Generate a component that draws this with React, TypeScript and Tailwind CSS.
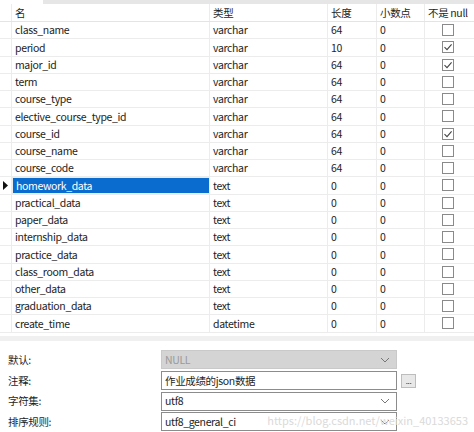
import React from "react";

interface FieldRow {
  name: string;
  type: string;
  length: string;
  decimals: string;
  notNull: boolean;
}

const rows: FieldRow[] = [
  { name: "class_name", type: "varchar", length: "64", decimals: "0", notNull: false },
  { name: "period", type: "varchar", length: "10", decimals: "0", notNull: true },
  { name: "major_id", type: "varchar", length: "64", decimals: "0", notNull: true },
  { name: "term", type: "varchar", length: "64", decimals: "0", notNull: false },
  { name: "course_type", type: "varchar", length: "64", decimals: "0", notNull: false },
  { name: "elective_course_type_id", type: "varchar", length: "64", decimals: "0", notNull: false },
  { name: "course_id", type: "varchar", length: "64", decimals: "0", notNull: true },
  { name: "course_name", type: "varchar", length: "64", decimals: "0", notNull: false },
  { name: "course_code", type: "varchar", length: "64", decimals: "0", notNull: false },
  { name: "homework_data", type: "text", length: "0", decimals: "0", notNull: false },
  { name: "practical_data", type: "text", length: "0", decimals: "0", notNull: false },
  { name: "paper_data", type: "text", length: "0", decimals: "0", notNull: false },
  { name: "internship_data", type: "text", length: "0", decimals: "0", notNull: false },
  { name: "practice_data", type: "text", length: "0", decimals: "0", notNull: false },
  { name: "class_room_data", type: "text", length: "0", decimals: "0", notNull: false },
  { name: "other_data", type: "text", length: "0", decimals: "0", notNull: false },
  { name: "graduation_data", type: "text", length: "0", decimals: "0", notNull: false },
  { name: "create_time", type: "datetime", length: "0", decimals: "0", notNull: false },
];

const SELECTED = "homework_data";

const Checkbox = ({ checked }: { checked: boolean }) => (
  <span className="flex h-[12px] w-[12px] items-center justify-center border border-[#8a8a8a] bg-white">
    {checked && (
      <svg width="10" height="10" viewBox="0 0 10 10">
        <path d="M1.5 5.2 L4 7.6 L8.6 2.4" fill="none" stroke="#444" strokeWidth="1.1" />
      </svg>
    )}
  </span>
);

const Chevron = () => (
  <svg width="10" height="6" viewBox="0 0 10 6" className="mr-[6px]">
    <path d="M1 1 L5 5 L9 1" fill="none" stroke="#777" strokeWidth="1" />
  </svg>
);

const cell = "flex items-center h-full border-r border-[#ececec] pl-[3px]";

const App: React.FC = () => {
  return (
    <div
      className="relative h-[432px] w-[474px] overflow-hidden bg-white text-[10.5px] tracking-[-0.35px] text-[#1e1e1e]"
      style={{ fontFamily: '"Noto Sans CJK SC", "Noto Sans", sans-serif' }}
    >
      <div className="ml-[43px] h-[4px] bg-[#e6e6e6]" />
      {/* header */}
      <div className="flex h-[18px] border-b border-[#e4e4e4]">
        <div className="w-[12px] border-r border-[#ececec]" />
        <div className={`${cell} w-[198px]`}>名</div>
        <div className={`${cell} w-[118px]`}>类型</div>
        <div className={`${cell} w-[49px]`}>长度</div>
        <div className={`${cell} w-[48px]`}>小数点</div>
        <div className="flex h-full flex-1 items-center whitespace-nowrap pl-[3px]">不是 null</div>
      </div>
      {/* body */}
      <div className="flex flex-col">
        {rows.map((r) => {
          const sel = r.name === SELECTED;
          return (
            <div key={r.name} className="flex h-[17.25px] border-b border-[#ececec]">
              <div className="flex w-[12px] items-center justify-center border-r border-[#ececec]">
                {sel && (
                  <svg width="5" height="9" viewBox="0 0 5 9">
                    <path d="M0 0 L5 4.5 L0 9 Z" fill="#111" />
                  </svg>
                )}
              </div>
              <div
                className={`${cell} w-[198px] ${
                  sel ? "bg-[#0a6ccf] text-white border border-[#3a3a3a]" : ""
                }`}
              >
                {r.name}
              </div>
              <div className={`${cell} w-[118px]`}>{r.type}</div>
              <div className={`${cell} w-[49px]`}>{r.length}</div>
              <div className={`${cell} w-[48px]`}>{r.decimals}</div>
              <div className="flex h-full flex-1 items-center justify-center pr-[3px]">
                <Checkbox checked={r.notNull} />
              </div>
            </div>
          );
        })}
      </div>
      <div className="mt-[3px] h-[5px] bg-[#f0f0f0]" />
      {/* property form */}
      <div className="flex flex-col pt-[9px]">
        <div className="flex h-[20.7px] items-center">
          <span className="w-[161px] pl-[8px]">默认:</span>
          <div className="flex h-[19px] w-[236px] items-center justify-between border border-[#c9c9c9] bg-[#d4d4d4] pl-[3px] text-[#9a9a9a]">
            NULL
            <Chevron />
          </div>
        </div>
        <div className="flex h-[20.7px] items-center">
          <span className="w-[161px] pl-[8px]">注释:</span>
          <div className="flex h-[19px] w-[236px] items-center border border-[#8c8c8c] bg-white pl-[3px]">
            作业成绩的json数据
          </div>
          <div className="ml-[4px] flex h-[14px] w-[15px] items-center justify-center border border-[#bdbdbd] bg-[#e8e8e8] text-[8px] leading-none text-[#333]">
            ...
          </div>
        </div>
        <div className="flex h-[20.7px] items-center">
          <span className="w-[161px] pl-[8px]">字符集:</span>
          <div className="flex h-[19px] w-[236px] items-center justify-between border border-[#8c8c8c] bg-white pl-[3px]">
            utf8
            <Chevron />
          </div>
        </div>
        <div className="flex h-[20.7px] items-center">
          <span className="w-[161px] pl-[8px]">排序规则:</span>
          <div className="flex h-[19px] w-[236px] items-center justify-between border border-[#8c8c8c] bg-white pl-[3px]">
            utf8_general_ci
            <Chevron />
          </div>
        </div>
      </div>
      <div className="pointer-events-none absolute right-[6px] top-[412px] text-[11px] tracking-normal text-[#dadada]">
        https://blog.csdn.net/weixin_40133653
      </div>
    </div>
  );
};

export default App;
